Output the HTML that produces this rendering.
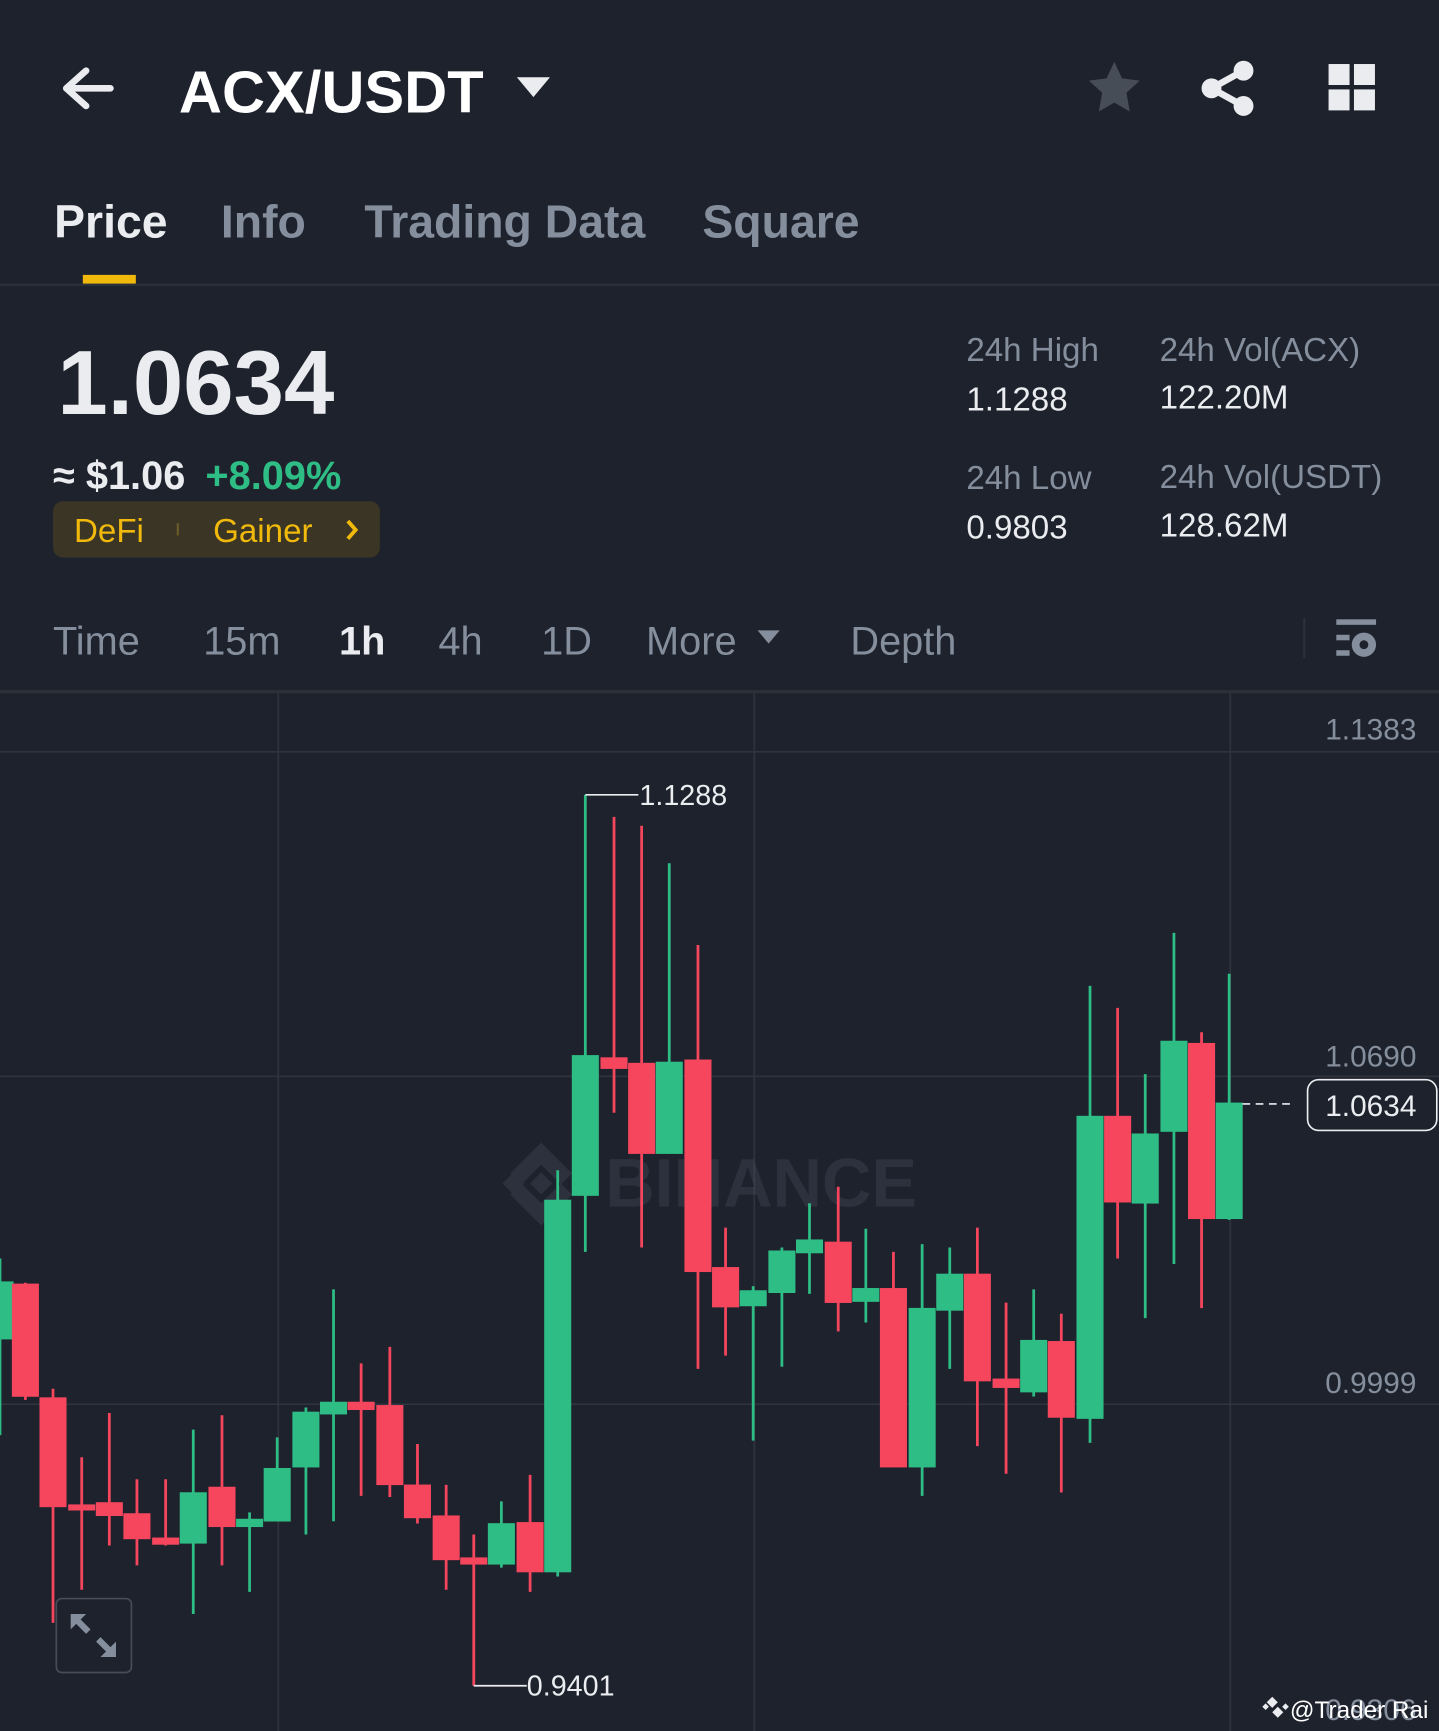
<!DOCTYPE html>
<html><head><meta charset="utf-8"><style>
html,body{margin:0;padding:0;background:#1e222d;}
svg{display:block;}
text{font-family:"Liberation Sans","DejaVu Sans",sans-serif;}
</style></head><body>
<svg width="1439" height="1731" viewBox="0 0 1303 1568" preserveAspectRatio="none" xmlns="http://www.w3.org/2000/svg">
<rect width="1303" height="1568" fill="#1e222d"/>
<path d="M100 80H62M78 64L60 80L78 96" stroke="#eaecef" stroke-width="6" fill="none" stroke-linecap="round" stroke-linejoin="round"/>
<text x="162" y="102" font-size="54" font-weight="bold" fill="#fff">ACX/USDT</text>
<path d="M468 70h30l-15 18z" fill="#eaecef"/>
<path d="M1009 56l7 15 16 2-12 11 3 17-14-8-14 8 3-17-12-11 16-2z" fill="#474d57"/>
<g fill="#eaecef"><circle cx="1126" cy="64" r="9"/><circle cx="1126" cy="96" r="9"/><circle cx="1097" cy="80" r="9"/></g>
<path d="M1126 64L1097 80L1126 96" stroke="#eaecef" stroke-width="6" fill="none"/>
<g fill="#eaecef"><rect x="1203" y="58" width="19" height="19"/><rect x="1226" y="58" width="19" height="19"/><rect x="1203" y="81" width="19" height="19"/><rect x="1226" y="81" width="19" height="19"/></g>
<text x="49" y="215" font-size="42" font-weight="bold" fill="#eaecef">Price</text>
<text x="200" y="215" font-size="42" font-weight="bold" fill="#848e9c">Info</text>
<text x="330" y="215" font-size="42" font-weight="bold" fill="#848e9c">Trading Data</text>
<text x="636" y="215" font-size="42" font-weight="bold" fill="#848e9c">Square</text>
<rect x="75" y="249" width="48" height="8" fill="#f0b90b"/>
<rect x="0" y="257" width="1303" height="2" fill="#2b3139"/>
<text x="52" y="375" font-size="82" font-weight="bold" fill="#eaecef">1.0634</text>
<text x="48" y="443" font-size="36" font-weight="bold" fill="#eaecef">≈ $1.06</text>
<text x="186" y="443" font-size="36" font-weight="bold" fill="#2ebd85">+8.09%</text>
<rect x="48" y="454" width="296" height="51" rx="9" fill="#3a3524"/>
<text x="67" y="491" font-size="30" fill="#f0b90b">DeFi</text>
<rect x="160" y="474" width="2" height="11" fill="#6b5b2a"/>
<text x="193" y="491" font-size="30" fill="#f0b90b">Gainer</text>
<path d="M315 472l7 8-7 8" stroke="#f0b90b" stroke-width="3.5" fill="none"/>
<g font-size="30">
<text x="875" y="327" fill="#848e9c">24h High</text>
<text x="1050" y="327" fill="#848e9c">24h Vol(ACX)</text>
<text x="875" y="372" fill="#eaecef">1.1288</text>
<text x="1050" y="370" fill="#eaecef">122.20M</text>
<text x="875" y="443" fill="#848e9c">24h Low</text>
<text x="1050" y="442" fill="#848e9c">24h Vol(USDT)</text>
<text x="875" y="488" fill="#eaecef">0.9803</text>
<text x="1050" y="486" fill="#eaecef">128.62M</text>
</g>
<g font-size="36">
<text x="48" y="593" fill="#848e9c">Time</text>
<text x="184" y="593" fill="#848e9c">15m</text>
<text x="307" y="593" font-weight="bold" fill="#eaecef">1h</text>
<text x="397" y="593" fill="#848e9c">4h</text>
<text x="490" y="593" fill="#848e9c">1D</text>
<text x="585" y="593" fill="#848e9c">More</text>
<text x="770" y="593" fill="#848e9c">Depth</text>
</g>
<path d="M686 571h20l-10 12z" fill="#848e9c"/>
<rect x="1180" y="560" width="2" height="36" fill="#2b3139"/>
<g fill="#848e9c"><rect x="1210" y="561" width="36" height="5"/><rect x="1210" y="575" width="12" height="5"/><rect x="1210" y="589" width="12" height="5"/><circle cx="1235" cy="584" r="11"/></g>
<circle cx="1235" cy="584" r="4" fill="#1e222d"/>
<rect x="0" y="625" width="1303" height="3" fill="#2b3139"/>
<g stroke="#2e333d" stroke-width="1.5">
<line x1="0" y1="681" x2="1303" y2="681"/><line x1="0" y1="975" x2="1303" y2="975"/><line x1="0" y1="1272" x2="1303" y2="1272"/>
<line x1="252" y1="628" x2="252" y2="1568"/><line x1="683" y1="628" x2="683" y2="1568"/><line x1="1114" y1="628" x2="1114" y2="1568"/>
</g>
<g font-size="27" fill="#848e9c">
<text x="1200" y="670">1.1383</text>
<text x="1200" y="966">1.0690</text>
<text x="1200" y="1262">0.9999</text>
<text x="1200" y="1558">0.9306</text>
</g>
<g opacity="0.14" fill="#848e9c">
<path d="M490 1035l28 28-10 10-18-18-18 18-10-10z M455 1072l10-10 10 10-10 10z M490 1110l-28-28 10-10 18 18 18-18 10 10z M490 1062l10 10-10 10-10-10z"/>
<text x="548" y="1093" font-size="62" font-weight="bold">BINANCE</text>
</g>
<g stroke-width="2.5">
<g stroke="#2ebd85" fill="#2ebd85">
<line x1="0" y1="1140" x2="0" y2="1300"/><rect x="-11" y="1162" width="22" height="50"/>
<line x1="175" y1="1295" x2="175" y2="1462"/><rect x="164" y="1353" width="22" height="44"/>
<line x1="226" y1="1370" x2="226" y2="1442"/><rect x="215" y="1377" width="22" height="5"/>
<line x1="251" y1="1302" x2="251" y2="1378"/><rect x="240" y="1331" width="22" height="46"/>
<line x1="277" y1="1275" x2="277" y2="1390"/><rect x="266" y="1280" width="22" height="48"/>
<line x1="302" y1="1168" x2="302" y2="1378"/><rect x="291" y="1271" width="22" height="9"/>
<line x1="454" y1="1360" x2="454" y2="1420"/><rect x="443" y="1381" width="22" height="35"/>
<line x1="505" y1="1060" x2="505" y2="1428"/><rect x="494" y="1088" width="22" height="335"/>
<line x1="530" y1="720" x2="530" y2="1134"/><rect x="519" y="957" width="22" height="125"/>
<line x1="606" y1="782" x2="606" y2="1045"/><rect x="595" y="963" width="22" height="81"/>
<line x1="682" y1="1165" x2="682" y2="1305"/><rect x="671" y="1170" width="22" height="12"/>
<line x1="708" y1="1130" x2="708" y2="1238"/><rect x="697" y="1134" width="22" height="36"/>
<line x1="733" y1="1090" x2="733" y2="1172"/><rect x="722" y="1124" width="22" height="10"/>
<line x1="784" y1="1113" x2="784" y2="1198"/><rect x="773" y="1168" width="22" height="10"/>
<line x1="835" y1="1127" x2="835" y2="1355"/><rect x="824" y="1186" width="22" height="142"/>
<line x1="860" y1="1130" x2="860" y2="1240"/><rect x="849" y="1155" width="22" height="31"/>
<line x1="936" y1="1168" x2="936" y2="1265"/><rect x="925" y="1215" width="22" height="45"/>
<line x1="987" y1="893" x2="987" y2="1307"/><rect x="976" y="1012" width="22" height="272"/>
<line x1="1037" y1="973" x2="1037" y2="1194"/><rect x="1026" y="1028" width="22" height="61"/>
<line x1="1063" y1="845" x2="1063" y2="1145"/><rect x="1052" y="944" width="22" height="80"/>
<line x1="1113" y1="882" x2="1113" y2="1105"/><rect x="1102" y="1000" width="22" height="103"/>
</g>
<g stroke="#f6465d" fill="#f6465d">
<line x1="23" y1="1162" x2="23" y2="1268"/><rect x="12" y="1164" width="22" height="100"/>
<line x1="48" y1="1258" x2="48" y2="1470"/><rect x="37" y="1267" width="22" height="97"/>
<line x1="74" y1="1320" x2="74" y2="1440"/><rect x="63" y="1364" width="22" height="3"/>
<line x1="99" y1="1280" x2="99" y2="1400"/><rect x="88" y="1362" width="22" height="10"/>
<line x1="124" y1="1340" x2="124" y2="1418"/><rect x="113" y="1372" width="22" height="21"/>
<line x1="150" y1="1340" x2="150" y2="1400"/><rect x="139" y="1394" width="22" height="4"/>
<line x1="201" y1="1282" x2="201" y2="1418"/><rect x="190" y="1348" width="22" height="34"/>
<line x1="327" y1="1235" x2="327" y2="1355"/><rect x="316" y="1271" width="22" height="5"/>
<line x1="353" y1="1220" x2="353" y2="1356"/><rect x="342" y="1274" width="22" height="70"/>
<line x1="378" y1="1308" x2="378" y2="1380"/><rect x="367" y="1346" width="22" height="28"/>
<line x1="404" y1="1345" x2="404" y2="1440"/><rect x="393" y="1374" width="22" height="38"/>
<line x1="429" y1="1390" x2="429" y2="1527"/><rect x="418" y="1412" width="22" height="4"/>
<line x1="480" y1="1336" x2="480" y2="1442"/><rect x="469" y="1380" width="22" height="43"/>
<line x1="556" y1="740" x2="556" y2="1008"/><rect x="545" y="959" width="22" height="8"/>
<line x1="581" y1="748" x2="581" y2="1130"/><rect x="570" y="964" width="22" height="80"/>
<line x1="632" y1="856" x2="632" y2="1240"/><rect x="621" y="961" width="22" height="190"/>
<line x1="657" y1="1112" x2="657" y2="1228"/><rect x="646" y="1149" width="22" height="34"/>
<line x1="759" y1="1075" x2="759" y2="1206"/><rect x="748" y="1126" width="22" height="53"/>
<line x1="809" y1="1134" x2="809" y2="1328"/><rect x="798" y="1168" width="22" height="160"/>
<line x1="885" y1="1112" x2="885" y2="1310"/><rect x="874" y="1155" width="22" height="95"/>
<line x1="911" y1="1180" x2="911" y2="1335"/><rect x="900" y="1250" width="22" height="6"/>
<line x1="961" y1="1190" x2="961" y2="1352"/><rect x="950" y="1216" width="22" height="67"/>
<line x1="1012" y1="913" x2="1012" y2="1140"/><rect x="1001" y="1012" width="22" height="76"/>
<line x1="1088" y1="935" x2="1088" y2="1185"/><rect x="1077" y="946" width="22" height="157"/>
</g>
</g>
<path d="M530 720H578" stroke="#eaecef" stroke-width="1.5"/>
<text x="579" y="729" font-size="26" fill="#eaecef">1.1288</text>
<path d="M429 1527H477" stroke="#eaecef" stroke-width="1.5"/>
<text x="477" y="1536" font-size="26" fill="#eaecef">0.9401</text>
<path d="M1125 1000H1172" stroke="#eaecef" stroke-width="1.5" stroke-dasharray="7 5"/>
<rect x="1184" y="978" width="117" height="46" rx="10" fill="#1e222d" stroke="#eaecef" stroke-width="1.5"/>
<text x="1200" y="1011" font-size="27" fill="#eaecef">1.0634</text>
<rect x="51" y="1448" width="68" height="67" rx="5" fill="#1e222d" stroke="#474d57" stroke-width="1.5"/>
<g fill="#848e9c"><path d="M64 1462h14l-5 5 9 9-4 4-9-9-5 5z"/><path d="M105 1501h-14l5-5-9-9 4-4 9 9 5-5z"/></g>
<g fill="#eaecef"><path d="M1152 1537l5 5-5 5-5-5z M1152 1551l5-5 5 5-5 5-5-5z M1143 1546l3-3 3 3-3 3z M1161 1546l3-3 3 3-3 3z"/></g>
<text x="1168" y="1556" font-size="22" fill="#ffffff">@Trader Rai</text>
</svg>
</body></html>
